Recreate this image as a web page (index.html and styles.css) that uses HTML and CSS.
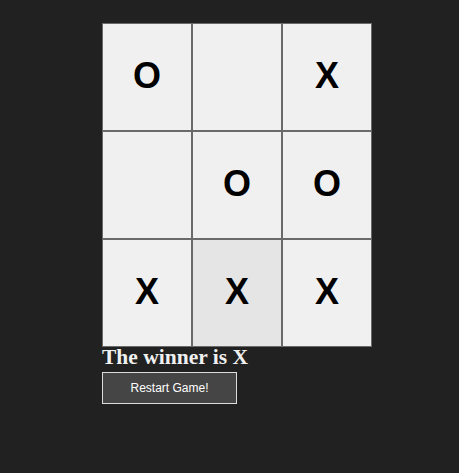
FILE: index.html
```html
<!DOCTYPE html>
<html>
<head>
<meta charset="utf-8">
<link rel="stylesheet" href="styles.css">
</head>
<body>
<div class="game">
  <div class="board">
    <div class="cell">O</div>
    <div class="cell"></div>
    <div class="cell">X</div>
    <div class="cell"></div>
    <div class="cell">O</div>
    <div class="cell">O</div>
    <div class="cell">X</div>
    <div class="cell hover">X</div>
    <div class="cell">X</div>
  </div>
  <h2 class="status">The winner is X</h2>
  <button class="restart">Restart Game!</button>
</div>
</body>
</html>
```
FILE: styles.css
```css
html, body {
  margin: 0;
  padding: 0;
  background: #212121;
}
body {
  padding: 23px 0 0 102px;
  font-family: "Liberation Serif", "Times New Roman", serif;
}
.game {
  display: flex;
  flex-direction: column;
  align-items: flex-start;
}
.board {
  display: grid;
  grid-template-columns: repeat(3, 90px);
  grid-template-rows: repeat(3, 108px);
}
.cell {
  box-sizing: border-box;
  border: 1px solid #6a6a6a;
  background: #f0f0f0;
  display: flex;
  align-items: center;
  justify-content: center;
  font-family: "Liberation Sans", Arial, sans-serif;
  font-weight: bold;
  font-size: 36px;
  line-height: 1;
  padding-bottom: 2px;
  color: #000;
}
.cell.hover {
  background: #e5e5e5;
}
.status {
  margin: 0;
  font-size: 21.5px;
  font-weight: bold;
  color: #f0f0f0;
  line-height: 21px;
  padding-bottom: 4px;
}
.restart {
  margin-top: 0;
  width: 135px;
  height: 32px;
  background: #454545;
  color: #ffffff;
  border: 1px solid #dcdcdc;
  font-family: "Liberation Sans", Arial, sans-serif;
  font-size: 12px;
  padding: 0;
}
```
